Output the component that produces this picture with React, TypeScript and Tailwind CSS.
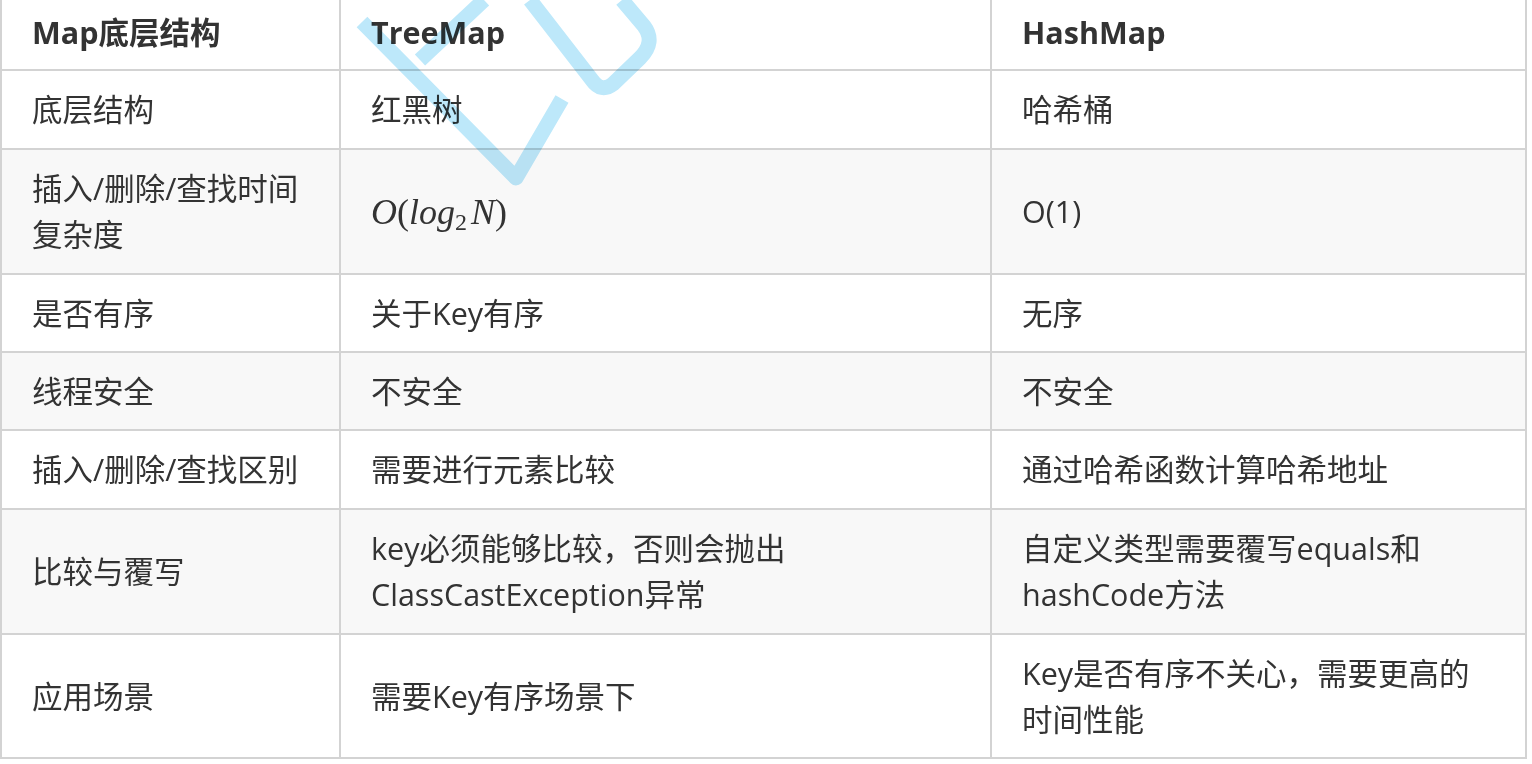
import React from 'react';

const rows: { name: string[]; tree: React.ReactNode; hash: string[] }[] = [
  { name: ['底层结构'], tree: '红黑树', hash: ['哈希桶'] },
  { name: ['插入/删除/查找时间', '复杂度'], tree: 'LOG', hash: ['O(1)'] },
  { name: ['是否有序'], tree: '关于Key有序', hash: ['无序'] },
  { name: ['线程安全'], tree: '不安全', hash: ['不安全'] },
  { name: ['插入/删除/查找区别'], tree: '需要进行元素比较', hash: ['通过哈希函数计算哈希地址'] },
  {
    name: ['比较与覆写'],
    tree: 'key必须能够比较，否则会抛出\nClassCastException异常',
    hash: ['自定义类型需要覆写equals和', 'hashCode方法'],
  },
  { name: ['应用场景'], tree: '需要Key有序场景下', hash: ['Key是否有序不关心，需要更高的', '时间性能'] },
];

function LogN() {
  return (
    <span className="font-['Liberation_Serif',serif] text-[36px] leading-[46px] relative top-[3px]">
      <i>O</i>(<i>log</i>
      <span className="text-[24px] not-italic relative top-[6px] mr-[4px]">2</span>
      <i>N</i>)
    </span>
  );
}

function Watermark() {
  return (
    <svg
      className="pointer-events-none absolute left-0 top-0 mix-blend-multiply"
      width="700"
      height="200"
      viewBox="0 0 700 200"
      fill="none"
    >
      <g stroke="#bde8fa" strokeWidth="15" strokeLinejoin="round">
        <path d="M362 22 L516 178 L562 99" />
        <path d="M420 60 L484 0" />
        <path d="M530 0 L592 80 Q601 93 613 84 L640 58 Q656 42 644 26 L622 0" />
      </g>
    </svg>
  );
}

export default function App() {
  const cell = 'px-[30px] py-[15px] border-2 border-[#d3d3d3] align-middle';
  const head = 'border-l-2 border-b-2 border-[#d3d3d3] px-[30px] pt-[9px] pb-[14px] text-left font-bold';
  return (
    <div className="relative w-[1532px] h-[764px] bg-white overflow-hidden font-['Open_Sans','Noto_Sans_CJK_SC',sans-serif] text-[30.5px] leading-[46.4px] text-[#333]">
      <table className="w-[1525px] border-collapse table-fixed">
        <colgroup>
          <col className="w-[339px]" />
          <col className="w-[651px]" />
          <col className="w-[535px]" />
        </colgroup>
        <thead>
          <tr className="bg-white">
            <th className={head}>Map底层结构</th>
            <th className={head}>TreeMap</th>
            <th className={`${head} border-r-2`}>HashMap</th>
          </tr>
        </thead>
        <tbody>
          {rows.map((r, i) => (
            <tr key={i} className={i % 2 === 1 ? 'bg-[#f8f8f8]' : 'bg-white'}>
              <td className={cell}>
                {r.name.map((t, j) => (
                  <div key={j}>{t}</div>
                ))}
              </td>
              <td className={`${cell} whitespace-pre-line`}>{r.tree === 'LOG' ? <LogN /> : r.tree}</td>
              <td className={cell}>
                {r.hash.map((t, j) => (
                  <div key={j}>{t}</div>
                ))}
              </td>
            </tr>
          ))}
        </tbody>
      </table>
      <Watermark />
    </div>
  );
}
